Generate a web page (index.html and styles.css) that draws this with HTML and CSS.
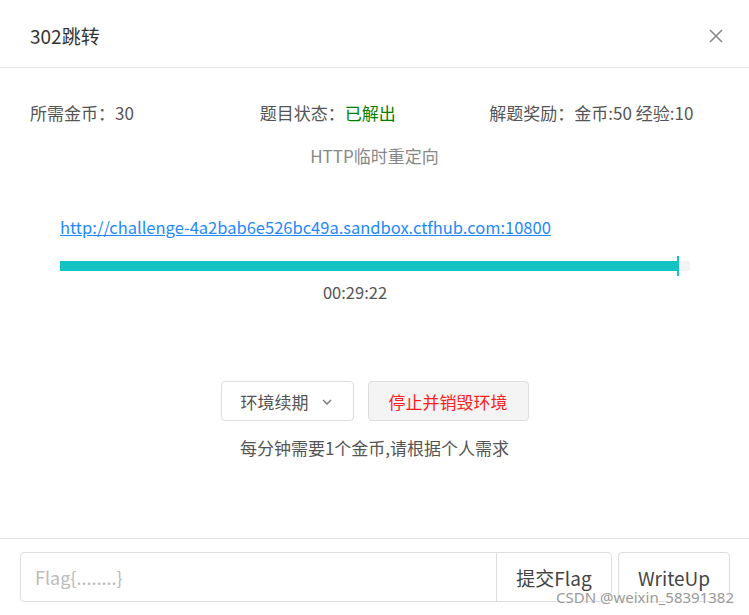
FILE: index.html
```html
<!DOCTYPE html>
<html lang="zh-CN">
<head>
  <meta charset="UTF-8" />
  <meta name="viewport" content="width=device-width, initial-scale=1.0" />
  <title>302跳转</title>
  <link rel="stylesheet" href="styles.css">
</head>
<body>
  <div class="modal">
    <div class="modal-header">
      <span class="modal-title">302跳转</span>
      <button class="close" aria-label="关闭">
        <svg width="14" height="14" viewBox="0 0 14 14"><path d="M1 1L13 13M13 1L1 13" stroke="#888" stroke-width="1.6" fill="none"/></svg>
      </button>
    </div>

    <div class="modal-body">
      <div class="info-row">
        <div class="info-item">所需金币：30</div>
        <div class="info-item">题目状态：<span class="solved">已解出</span></div>
        <div class="info-item">解题奖励：金币:50 经验:10</div>
      </div>
      <div class="subtitle">HTTP临时重定向</div>

      <div class="env">
        <a class="env-link" href="#">http://challenge-4a2bab6e526bc49a.sandbox.ctfhub.com:10800</a>
        <div class="progress">
          <div class="progress-bar" style="width: 97.9%"><span class="marker"></span></div>
        </div>
        <div class="timer">00:29:22</div>
      </div>

      <div class="actions">
        <button class="btn btn-renew">环境续期
          <svg class="caret" width="10" height="6" viewBox="0 0 10 6"><path d="M1 1L5 5L9 1" stroke="#777" stroke-width="1.3" fill="none"/></svg>
        </button>
        <button class="btn btn-danger">停止并销毁环境</button>
      </div>
      <div class="note">每分钟需要1个金币,请根据个人需求</div>
    </div>

    <div class="modal-footer">
      <div class="flag-group">
        <input class="flag-input" type="text" placeholder="Flag{........}">
        <button class="btn-submit">提交Flag</button>
      </div>
      <button class="btn-writeup">WriteUp</button>
    </div>
    <div class="watermark">CSDN @weixin_58391382</div>
  </div>
</body>
</html>
```

FILE: styles.css
```css
* {
  box-sizing: border-box;
}

body {
  margin: 0;
  background: #fff;
  font-family: "Noto Sans CJK SC", "Noto Sans", sans-serif;
  font-size: 17px;
  color: #555;
}

.modal {
  width: 749px;
  height: 615px;
  position: relative;
  background: #fff;
  overflow: hidden;
}

.modal-header {
  height: 68px;
  padding: 0 26px 0 30px;
  display: flex;
  align-items: center;
  justify-content: space-between;
  border-bottom: 1px solid #e5e5e5;
}

.modal-title {
  font-size: 19px;
  color: #333;
  margin-top: 3px;
}

.close {
  border: none;
  background: none;
  padding: 0;
  width: 14px;
  height: 14px;
  cursor: pointer;
  margin-top: 4px;
}

.modal-body {
  padding: 33px 30px 0;
}

.info-row {
  display: flex;
  line-height: 24px;
  color: #555;
}

.info-item {
  width: 230px;
}

.solved {
  color: #008000;
}

.subtitle {
  text-align: center;
  color: #888;
  line-height: 22px;
  margin-top: 20px;
}

.env {
  padding: 0 30px;
  margin-top: 47px;
}

.env-link {
  display: inline-block;
  font-size: 16.5px;
  line-height: 22px;
  color: #1e88ff;
  text-decoration: underline;
}

.progress {
  margin-top: 22px;
  height: 10px;
  background: #f3f3f3;
  width: 630px;
}

.progress-bar {
  height: 10px;
  background: #13c2c2;
  position: relative;
}

.marker {
  position: absolute;
  right: -2px;
  top: -5px;
  width: 2px;
  height: 20px;
  background: #13c2c2;
}

.timer {
  width: 590px;
  text-align: center;
  font-size: 16.5px;
  line-height: 22px;
  margin-top: 10px;
  color: #555;
}

.actions {
  display: flex;
  justify-content: center;
  gap: 14px;
  margin-top: 78px;
}

.btn {
  height: 40px;
  padding: 0 20px;
  font-family: inherit;
  font-size: 17px;
  color: #555;
  background: #fff;
  border: 1px solid #ddd;
  border-radius: 4px;
  display: flex;
  align-items: center;
  gap: 13px;
}

.btn-renew {
  padding: 0 21px 0 19px;
}

.btn-danger {
  background: #f4f4f4;
  color: #ff2020;
}

.caret {
  margin-top: 2px;
}

.note {
  text-align: center;
  line-height: 22px;
  color: #555;
  margin-top: 16px;
}

.modal-footer {
  position: absolute;
  left: 0;
  right: 0;
  top: 538px;
  border-top: 1px solid #e5e5e5;
  padding: 13px 19px 0 20px;
  display: flex;
  gap: 6px;
}

.flag-group {
  display: flex;
  width: 592px;
  height: 50px;
  border: 1px solid #ddd;
  border-radius: 4px;
}

.flag-input {
  flex: 1;
  border: none;
  border-right: 1px solid #ddd;
  padding: 0 14px;
  font-family: inherit;
  font-size: 18px;
  outline: none;
  background: transparent;
  border-radius: 4px 0 0 4px;
}

.flag-input::placeholder {
  color: #bbb;
}

.btn-submit,
.btn-writeup {
  font-family: inherit;
  font-size: 19px;
  color: #444;
  background: #fff;
  border: none;
  padding: 0;
}

.btn-submit {
  width: 114px;
  border-radius: 0 4px 4px 0;
}

.btn-writeup {
  width: 112px;
  height: 50px;
  border: 1px solid #ddd;
  border-radius: 4px;
}

.watermark {
  position: absolute;
  right: 15px;
  top: 586px;
  font-family: "Noto Sans", sans-serif;
  font-size: 15px;
  line-height: 22px;
  color: #999;
  text-shadow: 0 0 2px #fff, 0 0 2px #fff, 0 0 2px #fff;
}
```
